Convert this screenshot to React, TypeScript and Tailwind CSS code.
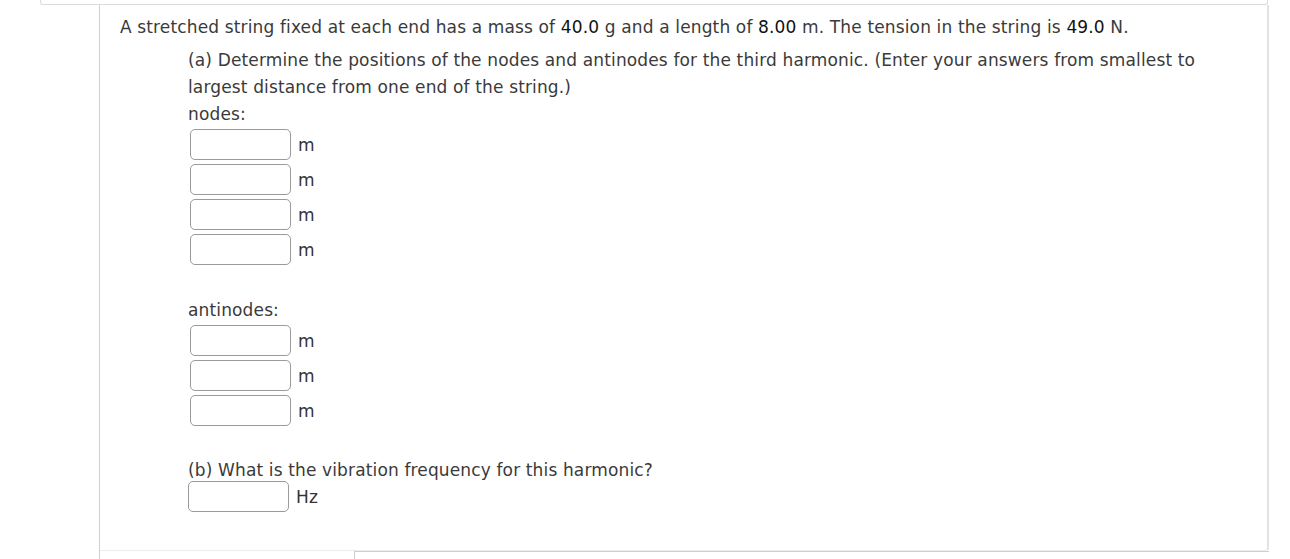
import React from "react";

function Box({ unit, wide = false }: { unit: string; wide?: boolean }) {
  return (
    <div className="flex items-center h-[35px]">
      <div className={`${wide ? "ml-0" : "ml-[2px]"} w-[101px] h-[31px] border border-[#9a9a9a] rounded-[5px] bg-white`} />
      <span className="ml-[7px] text-[#333]">{unit}</span>
    </div>
  );
}

export default function App() {
  return (
    <div
      className="w-[1290px] h-[559px] bg-white overflow-hidden text-[17px] tracking-[0.14px] leading-[26px] text-[#3a3a3a]"
      style={{ fontFamily: '"DejaVu Sans", Verdana, sans-serif' }}
    >
      <div className="ml-[40px] w-[1228px] h-[5px] border border-t-0 border-[#dcdcdc] rounded-b-[3px]" />
      <div className="ml-[99px] w-[1170px] h-[554px] border-l border-[#cfcfcf] flex flex-col">
        <div className="h-[546px] border-r-2 border-b border-r-[#e2e2e2] border-b-[#ececec] rounded-br-[4px] pl-[20px] pt-[9px]">
          <p>
            A stretched string fixed at each end has a mass of <span className="text-[#111]">40.0</span> g and a length of{" "}
            <span className="text-[#111]">8.00</span> m. The tension in the string is <span className="text-[#111]">49.0</span> N.
          </p>
          <div className="ml-[68px] mt-[7px] w-[1020px]">
            <p className="leading-[27px]">
              (a) Determine the positions of the nodes and antinodes for the third harmonic. (Enter your answers from smallest to
              largest distance from one end of the string.)
            </p>
            <p>nodes:</p>
            <div className="mt-[0px] flex flex-col">
              <Box unit="m" />
              <Box unit="m" />
              <Box unit="m" />
              <Box unit="m" />
            </div>
            <p className="mt-[30px]">antinodes:</p>
            <div className="mt-[0px] flex flex-col">
              <Box unit="m" />
              <Box unit="m" />
              <Box unit="m" />
            </div>
            <p className="mt-[29px]">(b) What is the vibration frequency for this harmonic?</p>
            <div className="mt-[-4px]">
              <Box unit="Hz" wide />
            </div>
          </div>
        </div>
        <div className="flex-1 flex">
          <div className="w-[254px]" />
          <div className="flex-1 border-t border-l border-[#cfcfcf]" />
        </div>
      </div>
    </div>
  );
}
